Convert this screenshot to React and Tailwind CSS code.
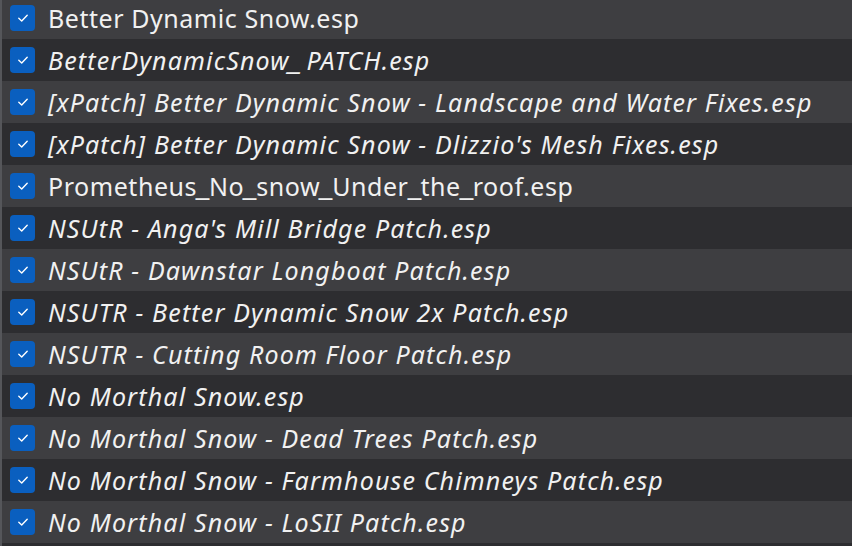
import React from "react";

const rows = [
  { t: "Better Dynamic Snow.esp", i: false },
  { t: "BetterDynamicSnow_PATCH.esp", i: true },
  { t: "[xPatch] Better Dynamic Snow - Landscape and Water Fixes.esp", i: true },
  { t: "[xPatch] Better Dynamic Snow - Dlizzio's Mesh Fixes.esp", i: true },
  { t: "Prometheus_No_snow_Under_the_roof.esp", i: false },
  { t: "NSUtR - Anga's Mill Bridge Patch.esp", i: true },
  { t: "NSUtR - Dawnstar Longboat Patch.esp", i: true },
  { t: "NSUTR - Better Dynamic Snow 2x Patch.esp", i: true },
  { t: "NSUTR - Cutting Room Floor Patch.esp", i: true },
  { t: "No Morthal Snow.esp", i: true },
  { t: "No Morthal Snow - Dead Trees Patch.esp", i: true },
  { t: "No Morthal Snow - Farmhouse Chimneys Patch.esp", i: true },
  { t: "No Morthal Snow - LoSII Patch.esp", i: true },
  { t: "", i: false, empty: true },
];

function Check() {
  return (
    <div className="w-[25px] h-[26px] rounded-[4px] bg-[#0a5fbf] flex items-center justify-center shrink-0">
      <svg width="14" height="14" viewBox="0 0 14 14" fill="none">
        <path d="M2.8 7.3 L5.7 10 L11.2 4.2" stroke="#ffffff" strokeWidth="1.4" strokeLinecap="round" strokeLinejoin="round" />
      </svg>
    </div>
  );
}

function Label({ text, italic }) {
  const parts = text.split("_");
  return parts.map((p, k) => (
    <React.Fragment key={k}>
      {p}
      {k < parts.length - 1 &&
        (italic ? (
          <span className="inline-block w-[17px]">
            <span className="inline-block origin-left scale-x-[1.4]">_</span>
          </span>
        ) : (
          <span className="inline-block w-[12px] text-center">
            <span className="inline-block scale-x-[1.25]">_</span>
          </span>
        ))}
    </React.Fragment>
  ));
}

export default function App() {
  return (
    <div className="w-[852px] h-[546px] overflow-hidden bg-[#2d2d30] flex">
      <div className="w-[2px] bg-[#55565a] shrink-0" />
      <div className="flex-1 flex flex-col -mt-[3px]">
        {rows.map((r, idx) => (
          <div
            key={idx}
            className={`h-[42px] shrink-0 flex items-center pl-[8px] gap-[13px] ${idx % 2 === 0 ? "bg-[#3e3e41]" : "bg-[#2d2d30]"}`}
          >
            {!r.empty && <Check />}
            {!r.empty && (
              <span
                className={`text-[25px] text-[#f1f1f1] whitespace-nowrap leading-none font-['Noto_Sans',sans-serif] ${r.i ? "italic tracking-[1.15px]" : "tracking-[0.55px]"}`}
              >
                <Label text={r.t} italic={r.i} />
              </span>
            )}
          </div>
        ))}
      </div>
    </div>
  );
}
